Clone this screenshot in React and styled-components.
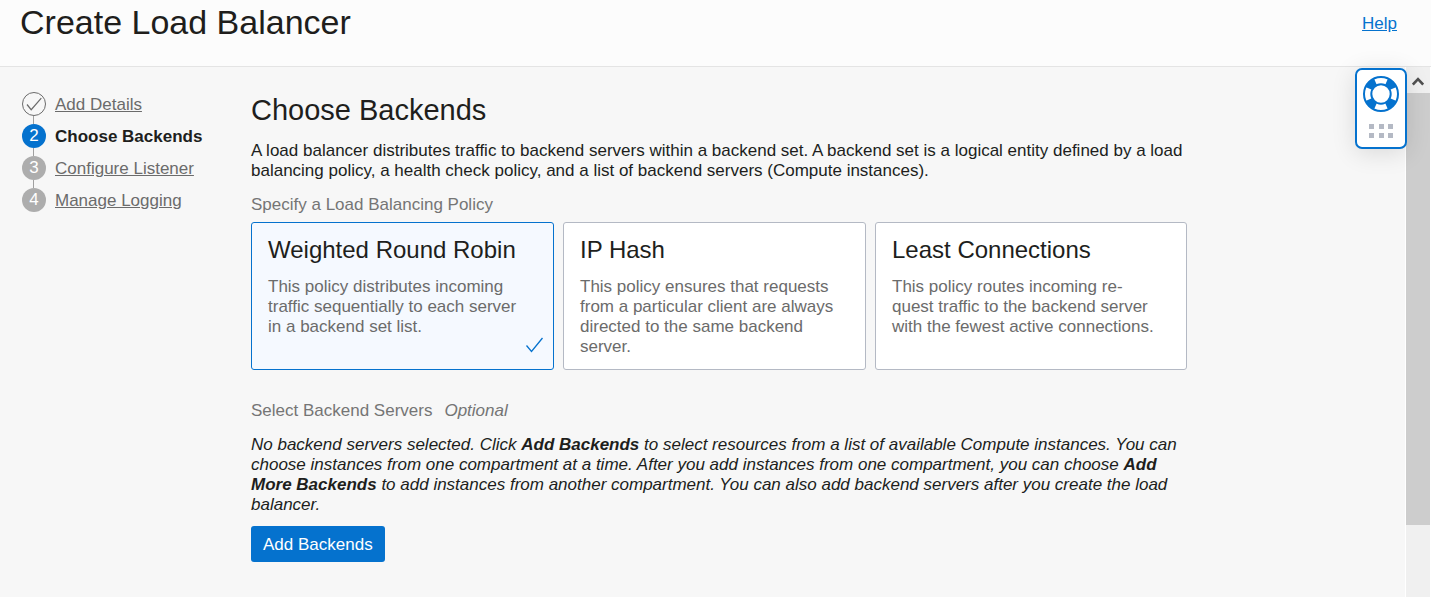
import React, { useState } from "react";
import styled, { createGlobalStyle } from "styled-components";

const Global = createGlobalStyle`
  * { box-sizing: border-box; }
  body {
    margin: 0;
    background: #f7f7f7;
    color: #201e1c;
    font: 17px/20px "Liberation Sans", Arial, sans-serif;
  }
`;

const Page = styled.div`
  position: relative;
  display: flex;
  flex-direction: column;
  min-height: 100vh;
`;

const Header = styled.header`
  display: flex;
  justify-content: space-between;
  align-items: flex-start;
  padding: 2px 34px 24px 20px;
  background: #fcfcfc;
  border-bottom: 1px solid #e4e4e4;
`;

const PageTitle = styled.h1`
  margin: 0;
  font-size: 34px;
  font-weight: 400;
  line-height: 40px;
`;

const HelpLink = styled.a`
  margin-top: 12px;
  color: #0572ce;
`;

const Body = styled.div`
  flex: 1;
  display: flex;
`;

const Sidebar = styled.nav`
  flex: none;
  width: 251px;
  padding: 25px 0 0 22px;
`;

const Steps = styled.ol`
  display: flex;
  flex-direction: column;
  margin: 0;
  padding: 0;
  list-style: none;
`;

const Step = styled.li`
  display: grid;
  grid-template-columns: 24px 1fr;
  grid-template-rows: 24px;
  column-gap: 9px;

  &:not(:last-child)::after {
    content: "";
    width: 1px;
    height: 8px;
    margin-left: 11px;
    background: #a0a0a0;
  }
`;

const stepColors = { current: "#0572ce", pending: "#adadad" };

const StepMarker = styled.span`
  border-radius: 50%;
  background: ${(p) => stepColors[p.$state] || "transparent"};
  color: #fff;
  line-height: 24px;
  text-align: center;

  svg { display: block; }
`;

const StepLink = styled.a`
  padding-top: 3px;
  color: ${(p) => (p.$current ? "#201e1c" : "#6b6b6b")};
  font-weight: ${(p) => (p.$current ? 700 : 400)};
  text-decoration: ${(p) => (p.$current ? "none" : "underline")};
`;

const Main = styled.main`
  flex: 1;
  min-width: 0;
  padding: 25px 20px 35px 0;
`;

const Content = styled.div`
  max-width: 936px;
`;

const SectionTitle = styled.h2`
  margin: 0 0 13px;
  font-size: 29px;
  font-weight: 400;
  line-height: 36px;
`;

const Text = styled.p`
  margin: 0;
  font-style: ${(p) => (p.$italic ? "italic" : "normal")};
`;

const Policies = styled.fieldset`
  margin: 14px 0 31px;
  padding: 0;
  border: 0;
  min-width: 0;
`;

const Legend = styled.legend`
  margin-bottom: 7px;
  padding: 0;
  color: #757575;
`;

const CardRow = styled.div`
  display: grid;
  grid-template-columns: repeat(3, 1fr);
`;

const Card = styled.label`
  position: relative;
  padding: 13px 30px 12px 16px;
  border: 1px solid ${(p) => (p.$selected ? "#0572ce" : "#b4b9c4")};
  border-radius: 3px;
  background: ${(p) => (p.$selected ? "#f5f9ff" : "#fff")};
  cursor: pointer;

  &:not(:last-child) { margin-right: 9px; }
`;

const CardRadio = styled.input`
  position: absolute;
  inset: 0;
  margin: 0;
  opacity: 0;
`;

const CardTitle = styled.span`
  display: block;
  margin-bottom: 13px;
  font-size: 24px;
  line-height: 28px;
`;

const CardText = styled.span`
  display: block;
  color: #6b6b6b;
`;

const CardCheck = styled.svg`
  position: absolute;
  right: 10px;
  bottom: 16px;
`;

const FieldHeading = styled.h3`
  display: flex;
  gap: 12px;
  margin: 0 0 14px;
  color: #757575;
  font-size: 17px;
  font-weight: 400;
`;

const PrimaryButton = styled.button`
  margin-top: 11px;
  padding: 9px 12px 7px;
  border: 0;
  border-radius: 3px;
  background: #0572ce;
  color: #fff;
  font: inherit;
  cursor: pointer;
`;

const ScrollRail = styled.div`
  flex: none;
  display: flex;
  flex-direction: column;
  width: 26px;
  border: solid #fff;
  border-width: 0 1px;
  background: #f0f0f0;
`;

const ScrollArrow = styled.div`
  display: grid;
  place-items: center;
  height: 26px;
  padding-top: 2px;
`;

const ScrollTrack = styled.div`
  flex: 1;
`;

const ScrollThumb = styled.div`
  height: 432px;
  background: #cdcdcd;
`;

const SupportButton = styled.button`
  position: absolute;
  top: 68px;
  right: 24px;
  display: flex;
  flex-direction: column;
  align-items: center;
  gap: 11px;
  width: 52px;
  height: 81px;
  padding: 5px 0 0;
  border: 2px solid #0572ce;
  border-radius: 7px;
  background: #fff;
  box-shadow: 0 4px 24px rgba(0, 0, 0, 0.12);
  cursor: pointer;
`;

const STEPS = [
  { label: "Add Details", state: "done" },
  { label: "Choose Backends", state: "current" },
  { label: "Configure Listener", state: "pending" },
  { label: "Manage Logging", state: "pending" },
];

const POLICIES = [
  {
    id: "round-robin",
    title: "Weighted Round Robin",
    text: "This policy distributes incoming traffic sequentially to each server in a backend set list.",
  },
  {
    id: "ip-hash",
    title: "IP Hash",
    text: "This policy ensures that requests from a particular client are always directed to the same backend server.",
  },
  {
    id: "least-connections",
    title: "Least Connections",
    text: "This policy routes incoming re\u00adquest traffic to the backend server with the fewest active connections.",
  },
];

function DoneIcon() {
  return (
    <svg width="24" height="24" viewBox="0 0 24 24" fill="none" stroke="#6b6b6b" aria-hidden="true">
      <circle cx="12" cy="12" r="11.5" />
      <path d="M5 12.5l4.2 5.2L19.3 6.2" strokeWidth="1.2" />
    </svg>
  );
}

function LifebuoyIcon() {
  return (
    <svg width="38" height="38" viewBox="0 0 38 38" fill="none" stroke="#0572ce" aria-hidden="true">
      <circle cx="19" cy="19" r="17" strokeWidth="2" />
      <circle cx="19" cy="19" r="9.7" strokeWidth="2" />
      <circle
        cx="19"
        cy="19"
        r="13.5"
        strokeWidth="7"
        pathLength="360"
        strokeDasharray="41 49"
        strokeDashoffset="-24.5"
      />
    </svg>
  );
}

function GripIcon() {
  return (
    <svg width="24" height="15" viewBox="0 0 24 15" fill="#b4b9c4" aria-hidden="true">
      {[0, 9].map((y) =>
        [0, 10, 19].map((x) => <rect key={`${x}-${y}`} x={x} y={y} width="5" height="5" />)
      )}
    </svg>
  );
}

export default function App() {
  const [policy, setPolicy] = useState("round-robin");

  return (
    <>
      <Global />
      <Page>
        <Header>
          <PageTitle>Create Load Balancer</PageTitle>
          <HelpLink href="#help">Help</HelpLink>
        </Header>
        <Body>
          <Sidebar aria-label="Steps">
            <Steps>
              {STEPS.map((step, i) => (
                <Step key={step.label}>
                  <StepMarker $state={step.state}>
                    {step.state === "done" ? <DoneIcon /> : i + 1}
                  </StepMarker>
                  <StepLink href={`#step-${i + 1}`} $current={step.state === "current"}>
                    {step.label}
                  </StepLink>
                </Step>
              ))}
            </Steps>
          </Sidebar>
          <Main>
            <Content>
              <SectionTitle>Choose Backends</SectionTitle>
              <Text>
                A load balancer distributes traffic to backend servers within a backend set. A
                backend set is a logical entity defined by a load balancing policy, a health check
                policy, and a list of backend servers (Compute instances).
              </Text>
              <Policies>
                <Legend>Specify a Load Balancing Policy</Legend>
                <CardRow>
                  {POLICIES.map((p) => (
                    <Card key={p.id} $selected={p.id === policy}>
                      <CardRadio
                        type="radio"
                        name="policy"
                        checked={p.id === policy}
                        onChange={() => setPolicy(p.id)}
                      />
                      <CardTitle>{p.title}</CardTitle>
                      <CardText>{p.text}</CardText>
                      {p.id === policy && (
                        <CardCheck width="17" height="16" viewBox="0 0 17 16" fill="none" stroke="#0572ce" aria-hidden="true">
                          <path d="M0.5 8.5l5 6L16.5 1" strokeWidth="1.3" />
                        </CardCheck>
                      )}
                    </Card>
                  ))}
                </CardRow>
              </Policies>
              <FieldHeading>
                Select Backend Servers <em>Optional</em>
              </FieldHeading>
              <Text $italic>
                No backend servers selected. Click <strong>Add Backends</strong> to select resources
                from a list of available Compute instances. You can choose instances from one
                compartment at a time. After you add instances from one compartment, you can choose{" "}
                <strong>Add More Backends</strong> to add instances from another compartment. You
                can also add backend servers after you create the load balancer.
              </Text>
              <PrimaryButton type="button">Add Backends</PrimaryButton>
            </Content>
          </Main>
          <ScrollRail aria-hidden="true">
            <ScrollArrow>
              <svg width="12" height="9" viewBox="0 0 12 9" fill="none" stroke="#505050" strokeWidth="2.6">
                <path d="M0.8 7.6L6 2.2l5.2 5.4" />
              </svg>
            </ScrollArrow>
            <ScrollTrack>
              <ScrollThumb />
            </ScrollTrack>
          </ScrollRail>
        </Body>
        <SupportButton type="button" aria-label="Support">
          <LifebuoyIcon />
          <GripIcon />
        </SupportButton>
      </Page>
    </>
  );
}
